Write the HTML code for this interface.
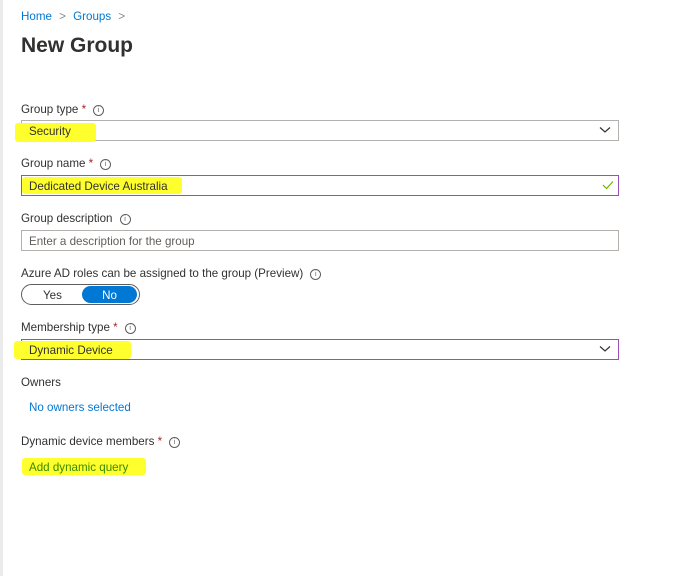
<!DOCTYPE html>
<html><head><style>
body{margin:0;width:696px;height:576px;background:#fff;position:relative;overflow:hidden;font-family:"Liberation Sans",sans-serif;color:#323130}
.a{position:absolute;white-space:nowrap}
.lbl{font-size:11.6px;color:#323130}
.req{color:#a4262c}
.info{display:inline-block;width:9px;height:9px;border:1px solid #605e5c;border-radius:50%;font-size:7px;line-height:9px;text-align:center;color:#605e5c;vertical-align:1px;margin-left:7px}
.box{position:absolute;left:21px;width:596px;height:19px;border:1px solid #b3b0ad;background:#fff}
.hl{position:absolute;background:#ffff2e;border-radius:3px}
.val{font-size:11.6px;color:#323130}
.link{font-size:11.6px;color:#0078d4}
</style></head><body>
<div class="a" style="left:0;top:0;width:3px;height:576px;background:#ebebeb"></div>
<div class="a" style="left:21px;top:10px;font-size:11.6px;color:#0078d4">Home <span style="color:#8a8886;margin:0 4px">&gt;</span> Groups <span style="color:#8a8886;margin-left:4px">&gt;</span></div>
<div class="a" style="left:21px;top:34px;font-size:21px;font-weight:bold;color:#323130">New Group</div>

<div class="a lbl" style="left:21px;top:103px">Group type <span class="req">*</span><span class="info">i</span></div>
<div class="box" style="top:120px"></div>
<div class="hl" style="left:15px;top:123px;width:81px;height:19px"></div>
<div class="a val" style="left:29px;top:125px">Security</div>
<svg class="a" style="left:599px;top:126px" width="12" height="8"><path d="M1 1.5L6 6L11 1.5" fill="none" stroke="#323130" stroke-width="1.2"/></svg>

<div class="a lbl" style="left:21px;top:157px">Group name <span class="req">*</span><span class="info">i</span></div>
<div class="box" style="top:175px;border-color:#9b4fb5"></div>
<div class="hl" style="left:22px;top:177px;width:160px;height:17px"></div>
<div class="a val" style="left:29px;top:180px">Dedicated Device Australia</div>
<svg class="a" style="left:602px;top:180px" width="12" height="10"><path d="M1 5L4.5 8.5L11 1.5" fill="none" stroke="#6bb700" stroke-width="1.2"/></svg>

<div class="a lbl" style="left:21px;top:212px">Group description<span class="info">i</span></div>
<div class="box" style="top:230px"></div>
<div class="a" style="left:29px;top:235px;font-size:11.6px;color:#605e5c">Enter a description for the group</div>

<div class="a lbl" style="left:21px;top:267px">Azure AD roles can be assigned to the group (Preview)<span class="info">i</span></div>
<div class="a" style="left:21px;top:284px;width:117px;height:19px;border:1px solid #605e5c;border-radius:11px"></div>
<div class="a" style="left:43px;top:289px;font-size:11.6px">Yes</div>
<div class="a" style="left:82px;top:286px;width:55px;height:17px;background:#0078d4;border-radius:9px;color:#fff;font-size:11.6px;text-align:center;line-height:19px">No</div>

<div class="a lbl" style="left:21px;top:321px">Membership type <span class="req">*</span><span class="info">i</span></div>
<div class="box" style="top:339px;border-color:#9b4fb5"></div>
<div class="hl" style="left:14px;top:341px;width:117px;height:18px"></div>
<div class="a val" style="left:29px;top:344px">Dynamic Device</div>
<svg class="a" style="left:599px;top:345px" width="12" height="8"><path d="M1 1.5L6 6L11 1.5" fill="none" stroke="#323130" stroke-width="1.2"/></svg>

<div class="a lbl" style="left:21px;top:376px">Owners</div>
<div class="a link" style="left:29px;top:401px">No owners selected</div>

<div class="a lbl" style="left:21px;top:435px">Dynamic device members <span class="req">*</span><span class="info">i</span></div>
<div class="hl" style="left:22px;top:458px;width:124px;height:17px"></div>
<div class="a" style="left:29px;top:461px;font-size:11.6px;color:#3a8a00">Add dynamic query</div>
</body></html>
